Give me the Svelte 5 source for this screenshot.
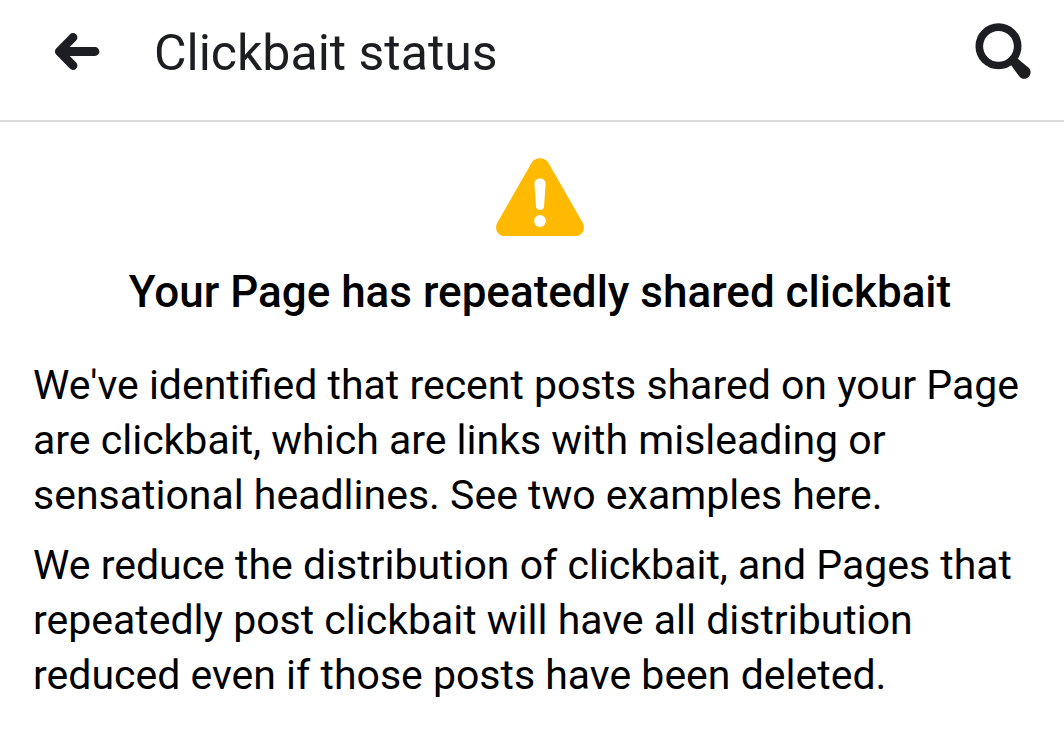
<script>
  let title = "Clickbait status"
  let heading = "Your Page has repeatedly shared clickbait"
  let paragraphs = [
    "We've identified that recent posts shared on your Page are clickbait, which are links with misleading or sensational headlines. See two examples here.",
    "We reduce the distribution of clickbait, and Pages that repeatedly post clickbait will have all distribution reduced even if those posts have been deleted."
  ]
</script>

<header class="topbar">
  <button class="iconbtn" aria-label="Back">
    <svg width="48" height="40" viewBox="0 0 48 40">
      <path d="M21 5.5 L7.3 19.5 L21 33.5 M8 19.5 H43" fill="none" stroke="#1c1e21" stroke-width="8.8" stroke-linecap="round" stroke-linejoin="round" />
    </svg>
  </button>
  <h1 class="title">{title}</h1>
  <button class="iconbtn" aria-label="Search">
    <svg width="60" height="60" viewBox="0 0 60 60">
      <circle cx="24.5" cy="24.3" r="19.2" fill="none" stroke="#1c1e21" stroke-width="7.6" />
      <path d="M37 43 L45 54 C47.5 57.6 52 57.6 54.5 55 C57.5 52 57.3 47.6 54 45.2 L43.5 36.5 Z" fill="#1c1e21" />
    </svg>
  </button>
</header>

<main class="content">
  <svg class="warning" width="88" height="78" viewBox="0 0 88 78">
    <path d="M35.5 5 C39 -1.2 49 -1.2 52.5 5 L86.8 65 C90 71 86 78 79.5 78 H8.5 C2 78 -2 71 1.2 65 Z" fill="#ffba00" />
    <path d="M38.4 26 C38.4 18.8 49.6 18.8 49.6 26 L48 49 C47.6 53 40.4 53 40 49 Z" fill="#fff" />
    <circle cx="44" cy="63" r="5.9" fill="#fff" />
  </svg>
  <h2 class="heading">{heading}</h2>
  {#each paragraphs as p}
    <p>{p}</p>
  {/each}
</main>

<style>
  :global(body) {
    background: #fff;
    font-family: Roboto, "Liberation Sans", sans-serif;
  }

  .topbar {
    display: flex;
    align-items: center;
    box-sizing: border-box;
    height: 122px;
    padding: 0 30px 14px 52px;
    border-bottom: 2px solid #dadada;
  }

  .iconbtn {
    display: flex;
    padding: 0 0 2px;
    border: none;
    background: none;
    cursor: pointer;
  }

  .title {
    flex: 1;
    margin: 0 0 0 54px;
    color: #1c1e21;
    font-size: 50px;
    font-weight: 400;
    line-height: 60px;
  }

  .content {
    display: flex;
    flex-direction: column;
    padding: 36px 17px 24px 33px;
  }

  .warning {
    align-self: center;
  }

  .heading {
    margin: 26px 0 36px;
    color: #000;
    font-size: 44px;
    font-weight: 500;
    line-height: 60px;
    text-align: center;
  }

  p {
    margin: 0 0 15px;
    color: #000;
    font-size: 41px;
    line-height: 55px;
  }
</style>
